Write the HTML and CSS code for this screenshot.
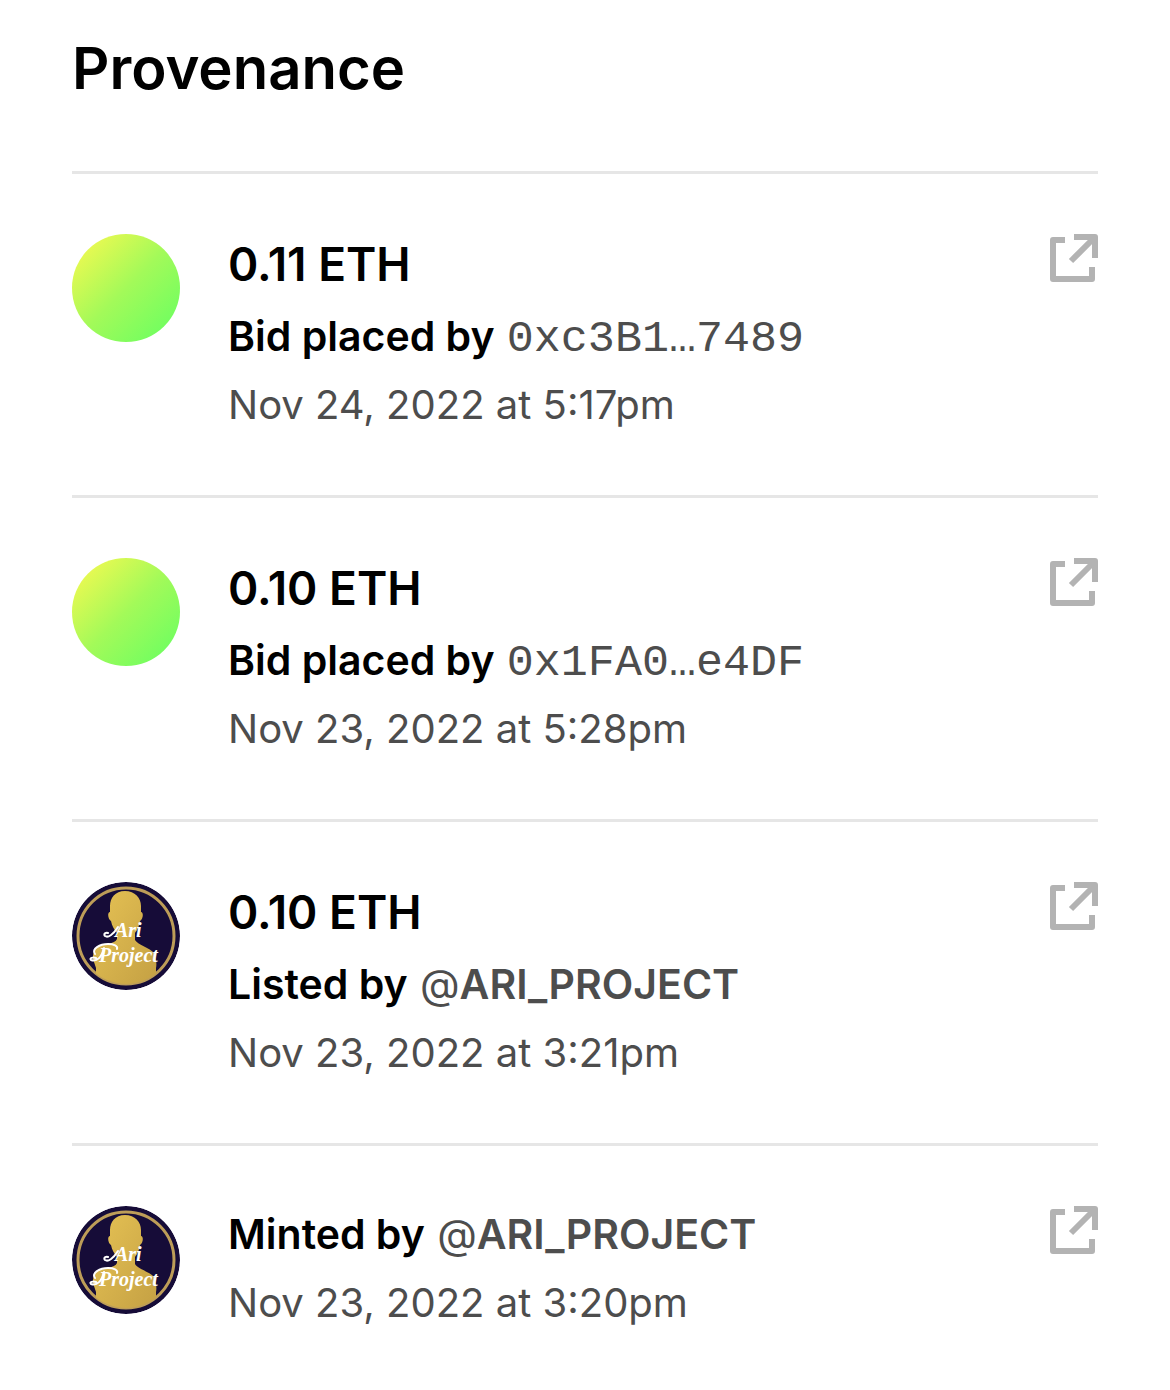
FILE: index.html
```html
<!DOCTYPE html>
<html lang="en">
<head>
  <meta charset="UTF-8" />
  <meta name="viewport" content="width=device-width, initial-scale=1.0"/>
  <title>Provenance</title>
  <link rel="stylesheet" href="styles.css">
</head>
<body>
  <!-- Shared icons -->
  <svg class="sprite" aria-hidden="true">
    <defs>
      <linearGradient id="gold" x1="0" y1="0" x2="1" y2="1">
        <stop offset="0" stop-color="#e6c254"/>
        <stop offset="1" stop-color="#c39f43"/>
      </linearGradient>
      <clipPath id="disc"><circle cx="54" cy="54" r="48"/></clipPath>
    </defs>
    <symbol id="external" viewBox="0 0 48 48">
      <path d="M15 6H3v39h39V33" fill="none" stroke="currentColor" stroke-width="6" stroke-linejoin="round"/>
      <path d="M24 3h21v21M44 4L21 27" fill="none" stroke="currentColor" stroke-width="6" stroke-linejoin="round"/>
    </symbol>
    <symbol id="ari" viewBox="0 0 108 108">
      <circle cx="54" cy="54" r="54" fill="#160c38"/>
      <circle cx="54" cy="54" r="48" fill="none" stroke="#bd9d58" stroke-width="3"/>
      <path clip-path="url(#disc)" fill="url(#gold)" d="M53 9c-10 0-15 7-15 15v6c-3 0-2 8 1 9 1 5 3 8 6 12v6c-2 5-14 5-19 7-4 3-5 7-5 13l3 9v25h60V86c1-4 0-11-2-15-4-5-16-8-19-13v-7c3-4 4-7 5-12 3-1 4-9 1-9v-6c0-8-6-15-16-15z"/>
      <path d="M46 45c-5 8-10 11-13 9-2-2 1-4 3-3M32 66c-2 9-7 14-13 12-2-2 2-3 5-2M23 72c-4-5 5-10 13-10 6 0 10 2 9 5" fill="none" stroke="#fff" stroke-width="2" stroke-linecap="round"/>
    </symbol>
  </svg>

  <main>
    <h1>Provenance</h1>
    <ul class="history">
      <li class="event">
        <div class="avatar"></div>
        <div class="details">
          <p class="amount">0.11 ETH</p>
          <p class="action">Bid placed by <a class="user address" href="#">0xc3B1…7489</a></p>
          <p class="date">Nov 24, 2022 at 5:17pm</p>
        </div>
        <a class="external" href="#" aria-label="View transaction"><svg><use href="#external"/></svg></a>
      </li>
      <li class="event">
        <div class="avatar"></div>
        <div class="details">
          <p class="amount">0.10 ETH</p>
          <p class="action">Bid placed by <a class="user address" href="#">0x1FA0…e4DF</a></p>
          <p class="date">Nov 23, 2022 at 5:28pm</p>
        </div>
        <a class="external" href="#" aria-label="View transaction"><svg><use href="#external"/></svg></a>
      </li>
      <li class="event">
        <svg class="avatar" viewBox="0 0 108 108">
          <use href="#ari"/>
          <text class="script" x="43" y="55">Ari</text>
          <text class="script" x="27" y="80">Project</text>
        </svg>
        <div class="details">
          <p class="amount">0.10 ETH</p>
          <p class="action">Listed by <a class="user" href="#"><span class="at">@</span>ARI_PROJECT</a></p>
          <p class="date">Nov 23, 2022 at 3:21pm</p>
        </div>
        <a class="external" href="#" aria-label="View transaction"><svg><use href="#external"/></svg></a>
      </li>
      <li class="event">
        <svg class="avatar" viewBox="0 0 108 108">
          <use href="#ari"/>
          <text class="script" x="43" y="55">Ari</text>
          <text class="script" x="27" y="80">Project</text>
        </svg>
        <div class="details">
          <p class="action">Minted by <a class="user" href="#"><span class="at">@</span>ARI_PROJECT</a></p>
          <p class="date">Nov 23, 2022 at 3:20pm</p>
        </div>
        <a class="external" href="#" aria-label="View transaction"><svg><use href="#external"/></svg></a>
      </li>
    </ul>
  </main>
</body>
</html>
```
FILE: styles.css
```css
body {
  font-family: Inter, "Liberation Sans", sans-serif;
  margin: 0;
  background: white;
  color: black;
}

.sprite {
  display: block;
  width: 0;
  height: 0;
}

main {
  padding: 32px 72px 0;
}

h1 {
  margin: 0 0 67px;
  font-size: 58px;
  line-height: 72px;
  font-weight: 600;
}

p {
  margin: 0;
}

.history {
  list-style: none;
  margin: 0;
  padding: 0;
}

.event {
  display: flex;
  align-items: flex-start;
  gap: 48px;
  padding: 60px 0 62px;
  border-top: 3px solid #e6e6e6;
}

.avatar {
  flex: none;
  width: 108px;
  height: 108px;
  border-radius: 50%;
  background: linear-gradient(135deg, #fff94f 0%, #a3fa59 50%, #63ff62 100%);
}

svg.avatar {
  background: none;
}

.script {
  fill: white;
  font-family: "Liberation Serif", serif;
  font-size: 20px;
  font-style: italic;
  font-weight: bold;
}

.details {
  flex: 1;
  display: flex;
  flex-direction: column;
  gap: 13px;
}

.amount {
  font-size: 46px;
  line-height: 61px;
  font-weight: 600;
}

.action,
.date {
  line-height: 56px;
}

.action {
  font-size: 41px;
  font-weight: 600;
}

.date {
  color: #4d4d4d;
  font-size: 40px;
}

.user {
  margin-left: 2px;
  color: #4d4d4d;
  text-decoration: none;
}

.address {
  font-family: "Liberation Mono", monospace;
  font-size: 45px;
  line-height: 1;
  font-weight: 400;
}

.at {
  font-weight: 400;
}

.external {
  flex: none;
  color: #b3b3b3;
}

.external svg {
  display: block;
  width: 48px;
  height: 48px;
}
```
